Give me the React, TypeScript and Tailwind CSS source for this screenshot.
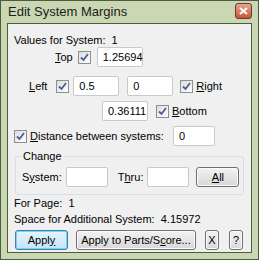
import React from 'react';

const font = { fontFamily: '"Liberation Sans", Arial, sans-serif' };

const Check = () => (
  <div className="w-[13px] h-[13px] border border-[#8e8f8f] bg-gradient-to-br from-[#dcdcdc] to-[#ffffff] flex items-center justify-center shrink-0">
    <svg width="9" height="9" viewBox="0 0 9 9">
      <path d="M1 4.5 L3.5 7 L8 1" fill="none" stroke="#4a5f97" strokeWidth="1.8" />
    </svg>
  </div>
);

const Field = ({ value = '', w = 'w-[46px]' }: { value?: string; w?: string }) => (
  <div className={`${w} h-[20px] border border-[#c5c9d0] bg-white rounded-[2px] flex items-center px-[5px] text-[11px] text-black shrink-0`}>
    {value}
  </div>
);

const Btn = ({ children, w, primary }: { children: React.ReactNode; w: string; primary?: boolean }) => (
  <div
    className={`${w} h-[20px] rounded-[3px] border flex items-center justify-center text-[11px] text-black shrink-0 ${
      primary
        ? 'border-[#3c7fb1] bg-gradient-to-b from-[#e5f4fc] to-[#c4e5f6] shadow-[inset_0_0_0_1px_#7fd0f3]'
        : 'border-[#707070] bg-gradient-to-b from-[#f2f2f2] to-[#d8d8d8] shadow-[inset_0_0_0_1px_#fcfcfc]'
    }`}
  >
    {children}
  </div>
);

export default function App() {
  return (
    <div style={font} className="w-[259px] h-[260px] border border-[#4f5b40] bg-[#c9d7b2] flex flex-col px-[6px] pb-[6px]">
      {/* title bar */}
      <div className="h-[22px] flex items-center justify-between pl-[1px]">
        <span className="text-[13px] text-[#1b1b1b]">Edit System Margins</span>
        <div className="w-[17px] h-[16px] mt-[-2px] rounded-[3px] border border-[#6b3a2e] bg-gradient-to-b from-[#e8a58f] to-[#c8523a] flex items-center justify-center">
          <svg width="9" height="8" viewBox="0 0 9 8">
            <path d="M1 1 L8 7 M8 1 L1 7" stroke="#ffffff" strokeWidth="2" />
          </svg>
        </div>
      </div>

      {/* content */}
      <div className="flex-1 border border-[#4f5b40] bg-[#f0f0f0] text-[11px] text-black pl-[6px] pt-[10px] flex flex-col">
        <div className="h-[13px] flex items-center">Values for System:&nbsp; 1</div>

        <div className="h-[20px] flex items-center">
          <span className="ml-[41px]"><u>T</u>op</span>
          <div className="ml-[5px]"><Check /></div>
          <div className="ml-[6px]"><Field value="1.25694" /></div>
        </div>

        <div className="h-[20px] mt-[9px] flex items-center">
          <span className="ml-[15px]"><u>L</u>eft</span>
          <div className="ml-[9px]"><Check /></div>
          <div className="ml-[4px]"><Field value="0.5" /></div>
          <div className="ml-[8px]"><Field value="0" /></div>
          <div className="ml-[7px]"><Check /></div>
          <span className="ml-[3px]"><u>R</u>ight</span>
        </div>

        <div className="h-[20px] mt-[5px] flex items-center">
          <div className="ml-[88px]"><Field value="0.36111" /></div>
          <div className="ml-[8px]"><Check /></div>
          <span className="ml-[3px]"><u>B</u>ottom</span>
        </div>

        <div className="h-[20px] mt-[5px] flex items-center">
          <Check />
          <span className="ml-[3px]"><u>D</u>istance between systems:</span>
          <div className="ml-[9px]"><Field value="0" w="w-[42px]" /></div>
        </div>

        {/* group box */}
        <div className="relative mt-[10px] ml-[1px] w-[229px] h-[39px] border border-[#d5dfe5] rounded-[3px]">
          <span className="absolute left-[5px] top-[-8px] px-[2px] bg-[#f0f0f0] leading-[14px]">Change</span>
          <div className="h-[20px] mt-[10px] flex items-center pl-[6px]">
            <span>S<u>y</u>stem:</span>
            <div className="ml-[4px]"><Field w="w-[42px]" /></div>
            <span className="ml-[10px]">T<u>h</u>ru:</span>
            <div className="ml-[4px]"><Field w="w-[42px]" /></div>
            <div className="ml-[7px]"><Btn w="w-[43px]"><u>A</u>ll</Btn></div>
          </div>
        </div>

        <div className="h-[13px] mt-[2px] flex items-center">For Page:&nbsp; 1</div>
        <div className="h-[13px] mt-[3px] flex items-center">Space for Additional System:&nbsp; 4.15972</div>

        <div className="h-[20px] mt-[4px] flex items-center">
          <div className="ml-[1px]"><Btn w="w-[53px]" primary>Appl<u>y</u></Btn></div>
          <div className="ml-[8px]"><Btn w="w-[120px]">Apply to Parts/S<u>c</u>ore...</Btn></div>
          <div className="ml-[9px]"><Btn w="w-[14px]">X</Btn></div>
          <div className="ml-[10px]"><Btn w="w-[14px]">?</Btn></div>
        </div>
      </div>
    </div>
  );
}
